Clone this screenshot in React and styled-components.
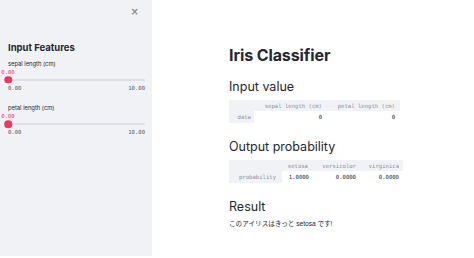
import React from "react";
import styled, { createGlobalStyle } from "styled-components";

const Global = createGlobalStyle`
  html, body { margin: 0; padding: 0; background: #ffffff; }
  body { font-family: "Inter", "Noto Sans", sans-serif; color: #262730; }
`;

const Page = styled.div`
  display: flex;
  width: 474px;
  height: 258px;
  overflow: hidden;
`;

const Sidebar = styled.aside`
  width: 152px;
  height: 256px;
  flex: none;
  background: #f0f2f6;
  box-sizing: border-box;
  padding: 0 7px 0 8px;
  display: flex;
  flex-direction: column;
`;

const CloseRow = styled.div`
  height: 22px;
  display: flex;
  align-items: center;
  justify-content: flex-end;
  padding-right: 6px;
  color: #8a8d96;
  font-size: 10px;
  font-family: "DejaVu Sans", sans-serif;
  font-weight: bold;
`;

const SideTitle = styled.h2`
  margin: 20px 0 0;
  font-size: 9.5px;
  line-height: 12px;
  font-weight: 700;
  color: #262730;
`;

const Field = styled.div`
  margin-top: ${(p) => p.$gap}px;
  display: flex;
  flex-direction: column;
`;

const FieldLabel = styled.div`
  font-size: 5.8px;
  line-height: 9px;
  color: #262730;
`;

const Mono = styled.div`
  font-family: "DejaVu Sans Mono", "Liberation Mono", monospace;
  font-size: 5.6px;
  line-height: 8px;
`;

const ValueRow = styled(Mono)`
  position: relative;
  height: 8px;
`;

const ValueText = styled.span`
  position: absolute;
  left: ${(p) => p.$at}px;
  transform: translateX(-50%);
  color: #f63366;
`;

const TrackRow = styled.div`
  position: relative;
  height: 8px;
  display: flex;
  align-items: center;
`;

const Track = styled.div`
  flex: 1;
  height: 2px;
  border-radius: 1px;
  background: #dfe1e8;
`;

const Thumb = styled.div`
  position: absolute;
  left: ${(p) => p.$at}px;
  top: 50%;
  width: 7.5px;
  height: 7.5px;
  border-radius: 50%;
  background: #f63366;
  transform: translate(-50%, -50%);
`;

const MinMax = styled(Mono)`
  display: flex;
  justify-content: space-between;
  color: #555861;
`;

const Main = styled.main`
  flex: 1;
  padding: 45px 0 0 77px;
  display: flex;
  flex-direction: column;
  align-items: flex-start;
`;

const Title = styled.h1`
  margin: 0;
  font-size: 16px;
  line-height: 20px;
  font-weight: 700;
  color: #262730;
  letter-spacing: -0.1px;
`;

const Heading = styled.h3`
  margin: ${(p) => p.$top}px 0 0;
  font-size: 12.5px;
  line-height: 16px;
  font-weight: 400;
  color: #262730;
`;

const Table = styled.table`
  margin-top: ${(p) => p.$top}px;
  border-collapse: collapse;
  font-family: "DejaVu Sans Mono", "Liberation Mono", monospace;
  font-size: 5.6px;
  table-layout: fixed;
`;

const HeadCell = styled.th`
  width: ${(p) => p.$w}px;
  height: 11px;
  padding: 0 ${(p) => p.$pr || 4}px 0 0;
  box-sizing: border-box;
  text-align: right;
  font-weight: 400;
  background: #f0f2f6;
  color: #8e909a;
`;

const IndexCell = styled.th`
  height: 12px;
  padding: 0 ${(p) => p.$pr || 3}px 0 0;
  text-align: right;
  font-weight: 400;
  background: #f0f2f6;
  color: #8e909a;
`;

const Cell = styled.td`
  height: 12px;
  padding: 0 ${(p) => p.$pr || 4}px 0 0;
  text-align: right;
  color: #262730;
`;

const Result = styled.p`
  margin: 4px 0 0;
  font-family: "Liberation Sans", "Noto Sans CJK JP", sans-serif;
  font-size: 6.6px;
  line-height: 10px;
  color: #262730;
`;

function Slider({ label, gap }) {
  return (
    <Field $gap={gap}>
      <FieldLabel>{label}</FieldLabel>
      <ValueRow>
        <ValueText $at={0}>0.00</ValueText>
      </ValueRow>
      <TrackRow>
        <Track />
        <Thumb $at={0} />
      </TrackRow>
      <MinMax>
        <span>0.00</span>
        <span>10.00</span>
      </MinMax>
    </Field>
  );
}

export default function App() {
  return (
    <>
      <Global />
      <Page>
        <Sidebar>
          <CloseRow>×</CloseRow>
          <SideTitle>Input Features</SideTitle>
          <Slider label="sepal length (cm)" gap={4.5} />
          <Slider label="petal length (cm)" gap={11.5} />
        </Sidebar>
        <Main>
          <Title>Iris Classifier</Title>
          <Heading $top={14}>Input value</Heading>
          <Table $top={5}>
            <thead>
              <tr>
                <HeadCell $w={25} />
                <HeadCell $w={74} $pr={6}>sepal length (cm)</HeadCell>
                <HeadCell $w={72} $pr={5}>petal length (cm)</HeadCell>
              </tr>
            </thead>
            <tbody>
              <tr>
                <IndexCell>data</IndexCell>
                <Cell $pr={6}>0</Cell>
                <Cell $pr={5}>0</Cell>
              </tr>
            </tbody>
          </Table>
          <Heading $top={15.5}>Output probability</Heading>
          <Table $top={5.5}>
            <thead>
              <tr>
                <HeadCell $w={53} />
                <HeadCell $w={30} $pr={4}>setosa</HeadCell>
                <HeadCell $w={48} $pr={4}>versicolor</HeadCell>
                <HeadCell $w={43} $pr={4}>virginica</HeadCell>
              </tr>
            </thead>
            <tbody>
              <tr>
                <IndexCell $pr={6}>probability</IndexCell>
                <Cell $pr={3}>1.0000</Cell>
                <Cell $pr={4}>0.0000</Cell>
                <Cell $pr={4}>0.0000</Cell>
              </tr>
            </tbody>
          </Table>
          <Heading $top={16}>Result</Heading>
          <Result>このアイリスはきっと setosa です!</Result>
        </Main>
      </Page>
    </>
  );
}
